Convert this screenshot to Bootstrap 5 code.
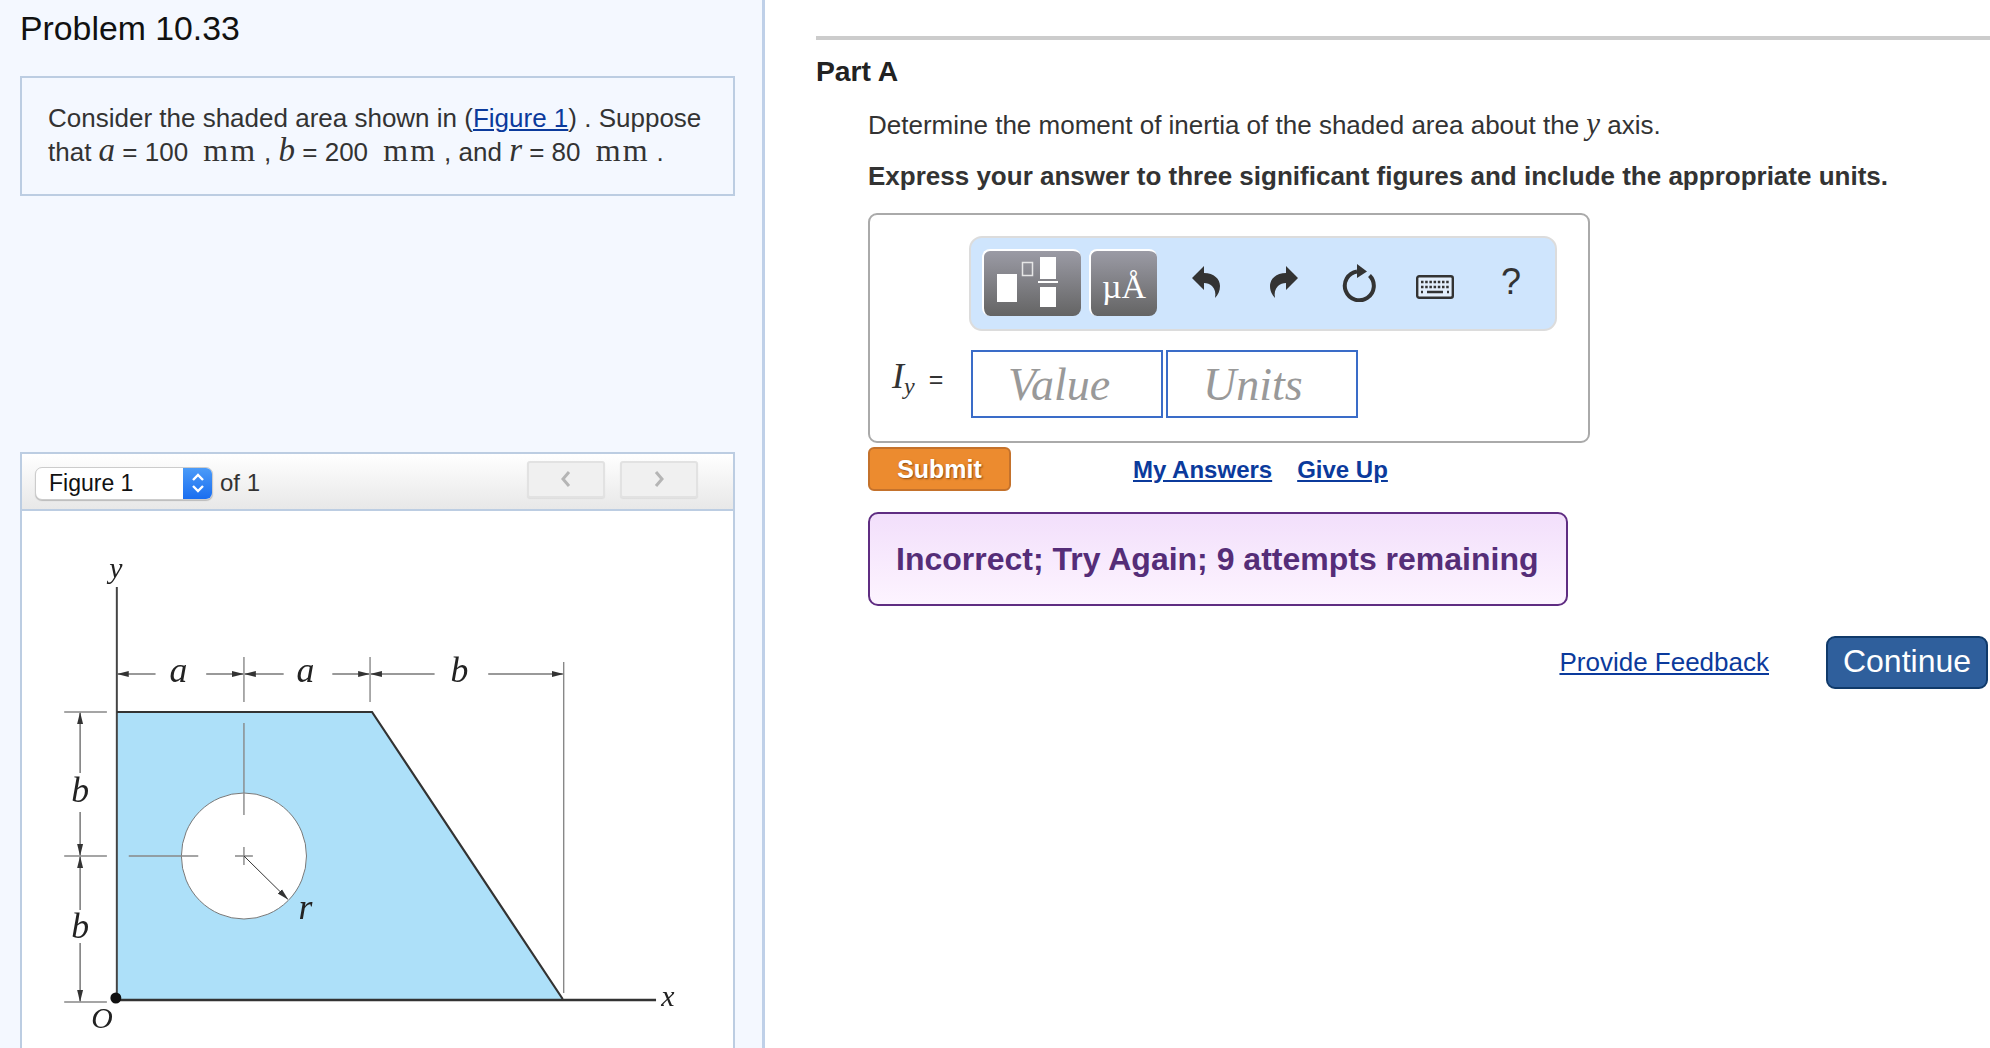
<!DOCTYPE html>
<html lang="en">
<head>
<meta charset="utf-8">
<title>Problem 10.33</title>
<link href="https://cdn.jsdelivr.net/npm/bootstrap@5.3.0/dist/css/bootstrap.min.css" rel="stylesheet">
<style>
html,body{height:100%;overflow:hidden;background:#fff}
body{font-family:"Liberation Sans",Arial,sans-serif;color:#333;font-size:26px}
a{color:#0b3a9c}
.shell{height:1048px;width:1990px}
.left-pane{width:765px;flex:none;background:#f4f8ff;border-right:3px solid #bfd0e8;padding:0 27px 0 20px;height:1048px;overflow:hidden}
.pb-title{font-size:33.8px;font-weight:400;color:#111;line-height:40px;margin:8px 0 28px}
.statement{border:2px solid #bccde2;height:120px;padding:26px 26px 0;line-height:29.5px;font-size:26px;color:#333;background:#f4f8ff}
.mi{font-family:"Liberation Serif",serif;font-style:italic;font-size:33px;line-height:1}
.mu{font-family:"Liberation Serif",serif;font-size:32px;letter-spacing:2px;margin:0 7px 0 8px;line-height:1}
.figure-box{margin-top:256px;border:2px solid #bccde2;border-bottom:0;background:#fff;height:610px}
.figure-head{height:57px;background:linear-gradient(#fff,#e8e8e8);border-bottom:2px solid #bccde2;padding:0 0 0 13px}
.fig-select{width:178px;height:33px;border:1px solid #ccc;border-radius:7px;background:#fff;overflow:hidden;font-size:23px;color:#111;box-shadow:0 1px 1px #bbb;margin-top:3px}
.fig-select-label{padding-left:13px}
.fig-select-arrow{width:29px;height:100%;background:linear-gradient(#4b9bf8,#1a6ef0)}
.of-text{font-size:24px;margin:3px 0 0 7px;color:#333}
.pager-group{margin-right:35px;margin-bottom:5px;gap:15px}
.pager{width:78px;height:37px;border:2px solid #e2e2e2;background:#f0f0f0;border-radius:3px;padding:0;box-shadow:0 1px 1px #ddd}
.right-pane{padding:0 0 0 51px;min-width:0}
.rule{height:4px;background:#ccc;margin-top:36px;margin-bottom:0;opacity:1;border:0}
.part-name{font-weight:700;font-size:28.3px;color:#222;line-height:32px;margin:15px 0 0}
.part-body{padding-left:52px}
.prompt{font-size:26px;line-height:32px;margin:21px 0 0;color:#333}
.prompt .mi{font-size:31px}
.prompt-strong{font-weight:700;font-size:26px;line-height:32px;margin:19px 0 0;color:#333}
.answer-box{width:722px;height:230px;margin-top:21px;border:2px solid #aaa;border-radius:9px;background:#fff;padding:21px 0 0 99px;position:relative}
.tool-strip{width:588px;height:95px;background:#cfe5fd;border:2px solid #dcdcdc;border-radius:13px;padding:11px 0 0 11px}
.tmpl{height:67px;background:linear-gradient(#9b9ba5,#646464);border-radius:8px;border:0;border-top:2px solid #fff;border-left:2px solid #fff;padding:0;color:#fff}
.tmpl-a{width:99px}
.tmpl-b{width:68px;margin-left:8px;font-family:"Liberation Serif",serif;font-size:34px;line-height:1;padding-top:6px}
.eq-row{margin-top:19px}
.eq-label{width:101px;margin-left:-99px;margin-bottom:14px;padding-left:22px;font-family:"Liberation Serif",serif;color:#333;white-space:nowrap;font-size:36px;font-style:italic;line-height:44px}
.eq-label sub{font-size:24px}
.eq-label span{font-family:"Liberation Sans",sans-serif;font-style:normal;font-size:25px;margin-left:14px}
.val-input{width:192px;height:68px;border:2px solid #3a6cc8;border-radius:0;font-family:"Liberation Serif",serif;font-style:italic;font-size:46px;padding:0 0 0 35px;background:#fff;box-shadow:none}
.val-input::placeholder{color:#999;opacity:1}
.action-row{margin-top:4px;height:44px;width:722px}
.btn-submit{width:143px;height:44px;background:#ec8b2f;border:2px solid #c4722c;border-radius:6px;color:#fff;font-weight:700;font-size:25px;padding:1px 0 0;line-height:1;text-shadow:1px 1px 2px #8a4a10}
.btn-submit:hover{background:#ec8b2f;color:#fff}
.act-link{font-weight:700;font-size:24px;color:#0b3a9c;padding-top:2px}
.verdict{width:700px;height:94px;margin:21px 0 0;padding:0 0 0 26px;border:2px solid #5f2d82;border-radius:10px;background:linear-gradient(#f2dffb,#fdf4ff);color:#552d78;font-weight:700;font-size:32px}
.foot-row{margin-top:30px;padding-right:2px}
.feedback{font-size:26px;margin-right:57px;color:#0b3a9c}
.btn-continue{width:162px;height:53px;background:#2f5f9c;border:2px solid #103a6a;border-radius:9px;color:#fff;font-size:32px;padding:0 0 3px;line-height:1}
.btn-continue:hover{background:#2f5f9c;color:#fff}
.diagram{display:block;filter:blur(.4px)}
.diagram text{font-family:"Liberation Serif",serif;font-style:italic;fill:#222;font-size:36px;text-anchor:middle}
.diagram .sm-label{font-size:30px}
.qmark{font-size:36px;color:#333;line-height:1}
.tool-svg{display:block;flex:none}
</style>
</head>
<body>
<div class="shell d-flex">
  <div class="left-pane">
    <h1 class="pb-title">Problem 10.33</h1>
    <div class="statement">
      Consider the shaded area shown in (<a href="#">Figure 1</a>) . Suppose<br>
      that <span class="mi">a</span> = 100 <span class="mu">mm</span>, <span class="mi">b</span> = 200 <span class="mu">mm</span>, and <span class="mi">r</span> = 80 <span class="mu">mm</span>.
    </div>
    <div class="figure-box">
      <div class="figure-head d-flex align-items-center">
        <div class="fig-select d-flex align-items-center justify-content-between">
          <span class="fig-select-label">Figure 1</span>
          <span class="fig-select-arrow d-flex align-items-center justify-content-center">
            <svg width="14" height="24" viewBox="0 0 14 24" fill="none" stroke="#fff" stroke-width="2.4"><path d="M2 9l5-5 5 5M2 15l5 5 5-5"/></svg>
          </span>
        </div>
        <span class="of-text">of 1</span>
        <div class="pager-group d-flex ms-auto">
          <button class="pager d-flex align-items-center justify-content-center" type="button" aria-label="Previous"><svg width="12" height="18" viewBox="0 0 12 18" fill="none" stroke="#b5b5b5" stroke-width="3"><path d="M9 2L3 9l6 7"/></svg></button>
          <button class="pager d-flex align-items-center justify-content-center" type="button" aria-label="Next"><svg width="12" height="18" viewBox="0 0 12 18" fill="none" stroke="#b5b5b5" stroke-width="3"><path d="M3 2l6 7-6 7"/></svg></button>
        </div>
      </div>
      <svg class="diagram" width="711" height="550" viewBox="21.500 511 716 550" preserveAspectRatio="none">
        <defs>
          <marker id="ah" markerWidth="12" markerHeight="8" refX="11" refY="4" orient="auto-start-reverse" markerUnits="userSpaceOnUse"><path d="M0 1L12 4L0 7z" fill="#333"/></marker>
        </defs>
        <path d="M117 712H374L566 999H117Z" fill="#ade0f9"/>
        <circle cx="245" cy="856" r="63" fill="#fff" stroke="#777" stroke-width="1"/>
        <g fill="none" stroke="#888" stroke-width="1.4">
          <path d="M245 657V702M372 657V702M567 662V993"/>
          <path d="M64 712H107M64 856H107M64 1002H107"/>
          <path d="M245 723V815M129 856H199M236 856H254M245 847V865"/>
        </g>
        <g fill="none" stroke="#333" stroke-width="1">
          <path d="M118 674H156" marker-start="url(#ah)"/>
          <path d="M207 674H244" marker-end="url(#ah)"/>
          <path d="M246 674H285" marker-start="url(#ah)"/>
          <path d="M334 674H371" marker-end="url(#ah)"/>
          <path d="M373 674H437" marker-start="url(#ah)"/>
          <path d="M491 674H566" marker-end="url(#ah)"/>
          <path d="M80 713V773" marker-start="url(#ah)"/>
          <path d="M80 812V855" marker-end="url(#ah)"/>
          <path d="M80 857V910" marker-start="url(#ah)"/>
          <path d="M80 943V1001" marker-end="url(#ah)"/>
          <path d="M245 856L289 899" marker-end="url(#ah)"/>
        </g>
        <path d="M117 587V1000" stroke="#444" stroke-width="2" fill="none"/>
        <path d="M117 712H374L566 999" stroke="#333" stroke-width="2.2" fill="none"/>
        <path d="M117 1000H660" stroke="#333" stroke-width="2.4" fill="none"/>
        <circle cx="116" cy="998" r="5.5" fill="#111"/>
        <text class="sm-label" x="116" y="578">y</text>
        <text x="179" y="682">a</text>
        <text x="307" y="682">a</text>
        <text x="462" y="682">b</text>
        <text x="80" y="802">b</text>
        <text x="80" y="938">b</text>
        <text x="307" y="919">r</text>
        <text class="sm-label" x="672" y="1006">x</text>
        <text class="sm-label" x="102" y="1028">O</text>
      </svg>
    </div>
  </div>
  <div class="right-pane flex-grow-1">
    <hr class="rule">
    <h2 class="part-name">Part A</h2>
    <div class="part-body">
      <p class="prompt">Determine the moment of inertia of the shaded area about the <span class="mi">y</span> axis.</p>
      <p class="prompt-strong">Express your answer to three significant figures and include the appropriate units.</p>
      <div class="answer-box">
        <div class="tool-strip d-flex align-items-start">
          <button class="tmpl tmpl-a" type="button" aria-label="Templates">
            <svg class="tool-svg" width="97" height="65" viewBox="0 0 97 65" fill="#fff"><rect x="13" y="23" width="20" height="28"/><rect x="38.500" y="11.500" width="10" height="13" fill="none" stroke="#e6e6e6" stroke-width="1.500"/><rect x="56" y="6" width="16" height="22"/><rect x="54" y="30" width="20" height="2"/><rect x="56" y="36" width="16" height="20"/></svg>
          </button>
          <button class="tmpl tmpl-b" type="button">µÅ</button>
          <div class="d-flex align-items-center position-relative flex-grow-1" style="height:67px">
            <svg class="tool-svg position-absolute" style="left:35px;top:17px" width="28" height="32" viewBox="0 0 28 32" fill="#333"><path d="M0 12L12 0V7C22 7 28 13 28 20C28 25 26 29 23 32C24 27 23 23 20 20C18 18 15 17 12 17V24Z"/></svg>
            <svg class="tool-svg position-absolute" style="left:113px;top:17px" width="28" height="32" viewBox="0 0 28 32" fill="#333"><path d="M28 12L16 0V7C6 7 0 13 0 20C0 25 2 29 5 32C4 27 5 23 8 20C10 18 13 17 16 17V24Z"/></svg>
            <svg class="tool-svg position-absolute" style="left:185px;top:15px" width="34" height="38" viewBox="0 0 34 38" fill="none"><path d="M27.500 11.500A14.500 14.500 0 1 1 15 7.500" stroke="#333" stroke-width="4"/><path d="M15 0L25 7.500L15 14Z" fill="#333"/></svg>
            <svg class="tool-svg position-absolute" style="left:259px;top:26px" width="38" height="24" viewBox="0 0 38 24" fill="none"><rect x="1.200" y="1.200" width="35.600" height="21.600" rx="2" fill="#e3eefb" stroke="#333" stroke-width="2.400"/><path d="M5 7H33M5 12H33" stroke="#333" stroke-width="2.400" stroke-dasharray="2.500 1.700"/><path d="M5 17H7M11 17H27M31 17H33" stroke="#333" stroke-width="2.400"/></svg>
            <span class="qmark position-absolute" style="left:344px;top:15px">?</span>
          </div>
        </div>
        <div class="eq-row d-flex align-items-center">
          <div class="eq-label">I<sub>y</sub><span>=</span></div>
          <input class="form-control val-input" type="text" placeholder="Value" aria-label="Value">
          <input class="form-control val-input" type="text" placeholder="Units" aria-label="Units" style="margin-left:3px">
        </div>
      </div>
      <div class="action-row d-flex align-items-center">
        <button class="btn btn-submit" type="button">Submit</button>
        <a class="act-link" href="#" style="margin-left:122px">My Answers</a>
        <a class="act-link" href="#" style="margin-left:25px">Give Up</a>
      </div>
      <div class="alert verdict d-flex align-items-center" role="alert">Incorrect; Try Again; 9 attempts remaining</div>
    </div>
    <div class="foot-row d-flex justify-content-end align-items-center">
      <a class="feedback" href="#">Provide Feedback</a>
      <button class="btn btn-continue" type="button">Continue</button>
    </div>
  </div>
</div>
</body>
</html>
